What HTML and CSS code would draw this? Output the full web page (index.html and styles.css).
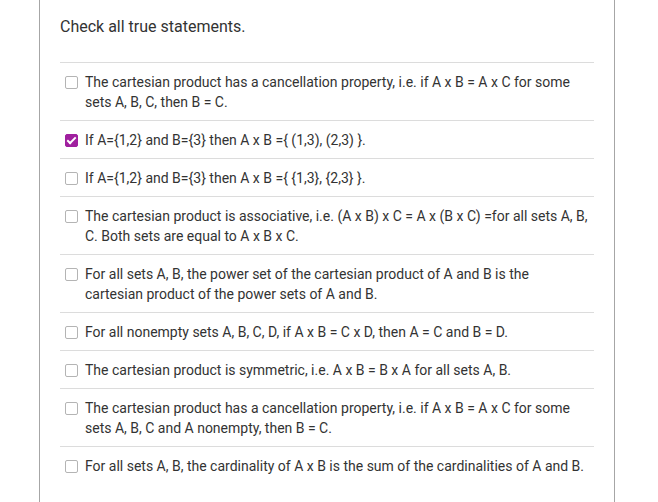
FILE: index.html
```html
<!DOCTYPE html>
<html lang="en">
<head>
    <meta charset="UTF-8">
    <title>Quiz</title>
    <link rel="stylesheet" href="styles.css">
</head>
<body>

<div class="card">
    <h2 class="question">Check all true statements.</h2>

    <ul class="answers">
        <li class="answer">
            <input type="checkbox" id="a1">
            <label for="a1">The cartesian product has a cancellation property, i.e. if A x B = A x C for some sets A, B, C, then B = C.</label>
        </li>
        <li class="answer">
            <input type="checkbox" id="a2" checked>
            <label for="a2">If A={1,2} and B={3} then A x B ={ (1,3), (2,3) }.</label>
        </li>
        <li class="answer">
            <input type="checkbox" id="a3">
            <label for="a3">If A={1,2} and B={3} then A x B ={ {1,3}, {2,3} }.</label>
        </li>
        <li class="answer">
            <input type="checkbox" id="a4">
            <label for="a4">The cartesian product is associative, i.e. (A x B) x C = A x (B x C) =for all sets A, B, C. Both sets are equal to A x B x C.</label>
        </li>
        <li class="answer">
            <input type="checkbox" id="a5">
            <label for="a5">For all sets A, B, the power set of the cartesian product of A and B is the cartesian product of the power sets of A and B.</label>
        </li>
        <li class="answer">
            <input type="checkbox" id="a6">
            <label for="a6">For all nonempty sets A, B, C, D, if A x B = C x D, then A = C and B = D.</label>
        </li>
        <li class="answer">
            <input type="checkbox" id="a7">
            <label for="a7">The cartesian product is symmetric, i.e. A x B = B x A for all sets A, B.</label>
        </li>
        <li class="answer">
            <input type="checkbox" id="a8">
            <label for="a8">The cartesian product has a cancellation property, i.e. if A x B = A x C for some sets A, B, C and A nonempty, then B = C.</label>
        </li>
        <li class="answer">
            <input type="checkbox" id="a9">
            <label for="a9">For all sets A, B, the cardinality of A x B is the sum of the cardinalities of A and B.</label>
        </li>
    </ul>
</div>

</body>
</html>
```

FILE: styles.css
```css
body {
    font-family: Roboto, "Liberation Sans", sans-serif;
    background-color: #fff;
    color: #333;
    margin: 0;
}
.card {
    width: 534px;
    min-height: 520px;
    margin-left: 39px;
    padding: 0 20px;
    border-left: 1px solid #a6a6a6;
    border-right: 1px solid #a6a6a6;
}
.question {
    font-size: 16px;
    font-weight: normal;
    line-height: 24px;
    margin: 0;
    padding: 15px 0 23px;
    color: #333;
}
.answers {
    list-style: none;
    margin: 0;
    padding: 0;
    border-top: 1px solid #dcdcdc;
}
.answer {
    display: flex;
    align-items: flex-start;
    font-size: 14px;
    line-height: 20px;
    padding: 9px 0 8px;
    border-bottom: 1px solid #dcdcdc; /* light separator */
}
.answer:last-child {
    border-bottom: none;
}
.answer input {
    appearance: none;
    position: relative;
    flex: none;
    box-sizing: border-box;
    width: 13px;
    height: 13px;
    margin: 4px 7px 0 5px;
    border: 1px solid #b4b4b4;
    border-radius: 2px;
    background: #fff;
}
.answer input:checked {
    background: #a0209f;
    border-color: #a0209f;
}
.answer input:checked::after {
    content: "";
    position: absolute;
    left: 3px;
    top: 0px;
    width: 3px;
    height: 7px;
    border: solid #fff;
    border-width: 0 2px 2px 0;
    transform: rotate(45deg);
}
.answer label {
    flex: 1;
    padding-right: 6px;
}
```
